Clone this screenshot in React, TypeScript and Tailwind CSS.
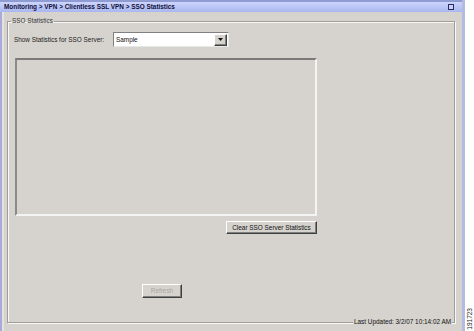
import React from "react";

export default function App() {
  const raised =
    "border border-t-[#ffffff] border-l-[#ffffff] border-r-[#404040] border-b-[#404040] shadow-[inset_-1px_-1px_0_#808080]";
  return (
    <div className="w-[474px] h-[331px] flex bg-white overflow-hidden font-['Liberation_Sans',Arial,sans-serif] text-[6.4px] leading-[8px] text-[#1c1c1c]">
      <div className="w-[465px] h-full flex flex-col bg-[#d6d3ce] border-r-[3px] border-[#b3bbe2]">
        <div className="h-[12px] shrink-0 border-t-2 border-[#8f9bd3] bg-gradient-to-b from-[#cdd5fb] to-[#a9b7ef] flex items-center justify-between pl-[4px] pr-[8px]">
          <span className="font-bold text-[#10103e]">Monitoring &gt; VPN &gt; Clientless SSL VPN &gt; SSO Statistics</span>
          <span className="w-[6px] h-[6px] border border-[#2a2a6a] bg-[#c8d0f6]"></span>
        </div>
        <div className="flex-1 flex">
          <div className="w-[2px] bg-[#a9a9da]"></div>
          <div className="w-[2px] bg-[#e4e2dc]"></div>
          <div className="flex-1 pl-[3px] pr-[7px] pt-[5px]">
            <fieldset className="h-[306px] border border-[#a09d96] shadow-[inset_1px_1px_0_#f8f8f8,1px_1px_0_#f8f8f8] p-0 m-0 min-w-0">
              <legend className="ml-[3px] px-[1px] text-[6.4px] leading-[8px] text-[#333]">SSO Statistics</legend>
              <div className="h-[297px] flex flex-col pl-[6px] pr-[1px]">
                <div className="flex items-center mt-[7px] h-[15px]">
                  <span className="w-[99px]">Show Statistics for SSO Server:</span>
                  <div className="w-[116px] h-[15px] bg-white border border-t-[#808080] border-l-[#808080] border-r-[#e8e8e8] border-b-[#e8e8e8] flex items-center justify-between pl-[2px] pr-[1px]">
                    <span className="text-[#111]">Sample</span>
                    <div className={`w-[13px] h-[12px] bg-[#d6d3ce] flex items-center justify-center ${raised}`}>
                      <svg width="5" height="3" viewBox="0 0 5 3">
                        <path d="M0 0H5L2.5 3Z" fill="#111" />
                      </svg>
                    </div>
                  </div>
                </div>
                <div className="mt-[11px] ml-[1px] w-[302px] h-[158px] border-2 border-t-[#7a7a7a] border-l-[#8a8a8a] border-r-[#f4f4f4] border-b-[#f4f4f4] bg-[#d6d3ce]"></div>
                <div className="w-[303px] flex justify-end mt-[5px]">
                  <div className={`w-[91px] h-[13px] bg-[#d6d3ce] flex items-center justify-center text-[#111] ${raised}`}>
                    Clear SSO Server Statistics
                  </div>
                </div>
                <div className="mt-[50px] ml-[128px]">
                  <div className={`w-[40px] h-[14px] bg-[#d6d3ce] flex items-center justify-center text-[#a8a6a0] ${raised}`}>
                    Refresh
                  </div>
                </div>
                <div className="flex-1"></div>
                <div className="flex justify-end pr-[1px] mb-[-4px] relative">
                  <span className="bg-[#d6d3ce] px-[1px] text-[#111]">Last Updated: 3/2/07 10:14:02 AM</span>
                </div>
              </div>
            </fieldset>
          </div>
        </div>
      </div>
      <div className="flex-1 flex items-end justify-center pb-[1px]">
        <span className="[writing-mode:vertical-rl] rotate-180 text-[6.5px] leading-[7px] text-[#222]">191723</span>
      </div>
    </div>
  );
}
